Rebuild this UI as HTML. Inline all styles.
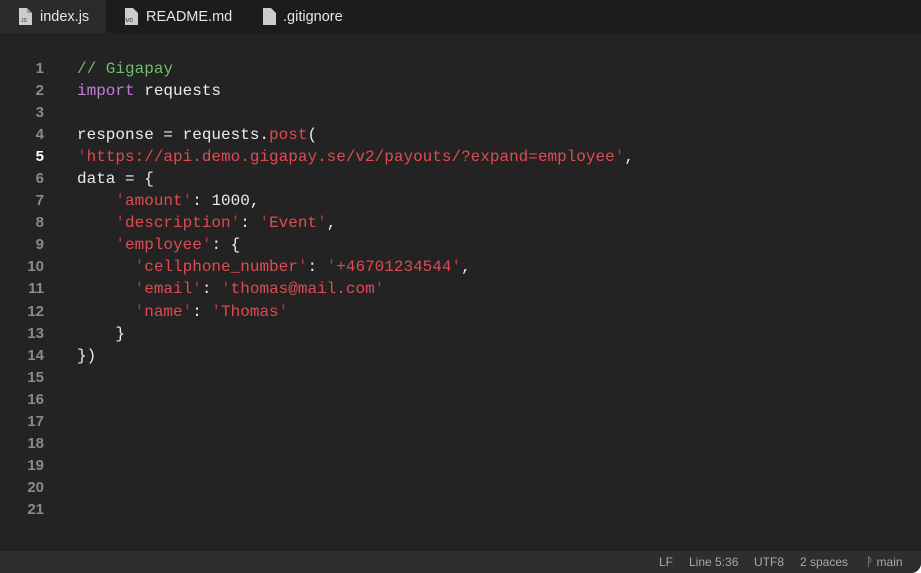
<!DOCTYPE html>
<html><head><meta charset="utf-8"><style>
*{margin:0;padding:0;box-sizing:border-box}
html,body{width:921px;height:573px;background:#fff;overflow:hidden}
.win{position:absolute;left:0;top:0;width:921px;height:573px;background:#232323;border-radius:0 0 10px 0;overflow:hidden;font-family:"Liberation Sans",sans-serif}
.tabs{position:absolute;left:0;top:0;width:921px;height:33px;background:#1c1c1c}
.tab{position:absolute;top:0;height:33px;color:#e6e6e6;font-size:14.5px;line-height:34px}
.tab.active{background:#2b2b2b}
.tab svg{position:absolute;top:8px}
.code{position:absolute;left:0;top:58px;width:921px;height:480px;font-family:"Liberation Mono","DejaVu Sans Mono",monospace;font-size:16px;line-height:22.05px;color:#ececec}
.ln{position:absolute;left:0;top:0;width:44px;text-align:right;color:#8a8a8a;font-family:"Liberation Sans",sans-serif;font-size:15px;white-space:pre;font-weight:bold}
.ln b{color:#fff}
.src{position:absolute;left:77px;top:0;white-space:pre}
.c{color:#6dbf6a}.k{color:#c77bd8}.s{color:#df4b51}.q{color:#b8383d}
.status{position:absolute;left:0;top:551px;width:921px;height:22px;background:#2e2e2e;color:#a8a8a8;font-size:12px;line-height:22px}
.status span{position:absolute;top:0}
</style></head><body><div class="win">
<div class="tabs">
<div class="tab active" style="left:0;width:106px"><svg style="left:18px" width="14" height="17" viewBox="0 0 14 17"><path d="M1 0h8l5 5v12H1z" fill="#ccc"/><path d="M9 0v5h5" fill="#999"/><text x="3" y="14" font-size="5" fill="#333" font-family="Liberation Sans">JS</text></svg><span style="position:absolute;left:40px">index.js</span></div>
<div class="tab" style="left:106px;width:138px"><svg style="left:18px" width="14" height="17" viewBox="0 0 14 17"><path d="M1 0h8l5 5v12H1z" fill="#ccc"/><text x="1.5" y="14" font-size="5" fill="#333" font-family="Liberation Sans">MD</text></svg><span style="position:absolute;left:40px">README.md</span></div>
<div class="tab" style="left:244px;width:120px"><svg style="left:18px" width="14" height="17" viewBox="0 0 14 17"><path d="M1 0h8l5 5v12H1z" fill="#ccc"/></svg><span style="position:absolute;left:39px">.gitignore</span></div>
</div>
<div class="code"><div class="ln">1
2
3
4
<b>5</b>
6
7
8
9
10
11
12
13
14
15
16
17
18
19
20
21</div><div class="src"><span class="c">// Gigapay</span>
<span class="k">import</span> requests

response = requests.<span class="s">post</span>(
<span class="q">'</span><span class="s">https://api.demo.gigapay.se/v2/payouts/?expand=employee</span><span class="q">'</span>,
data = {
    <span class="q">'</span><span class="s">amount</span><span class="q">'</span>: 1000,
    <span class="q">'</span><span class="s">description</span><span class="q">'</span>: <span class="q">'</span><span class="s">Event</span><span class="q">'</span>,
    <span class="q">'</span><span class="s">employee</span><span class="q">'</span>: {
      <span class="q">'</span><span class="s">cellphone_number</span><span class="q">'</span>: <span class="q">'</span><span class="s">+46701234544</span><span class="q">'</span>,
      <span class="q">'</span><span class="s">email</span><span class="q">'</span>: <span class="q">'</span><span class="s">thomas@mail.com</span><span class="q">'</span>
      <span class="q">'</span><span class="s">name</span><span class="q">'</span>: <span class="q">'</span><span class="s">Thomas</span><span class="q">'</span>
    }
})</div></div>
<div class="status"><span style="left:659px">LF</span><span style="left:689px">Line 5:36</span><span style="left:754px">UTF8</span><span style="left:800px">2 spaces</span><span style="left:866px">ᚹ main</span></div>
</div></body></html>
